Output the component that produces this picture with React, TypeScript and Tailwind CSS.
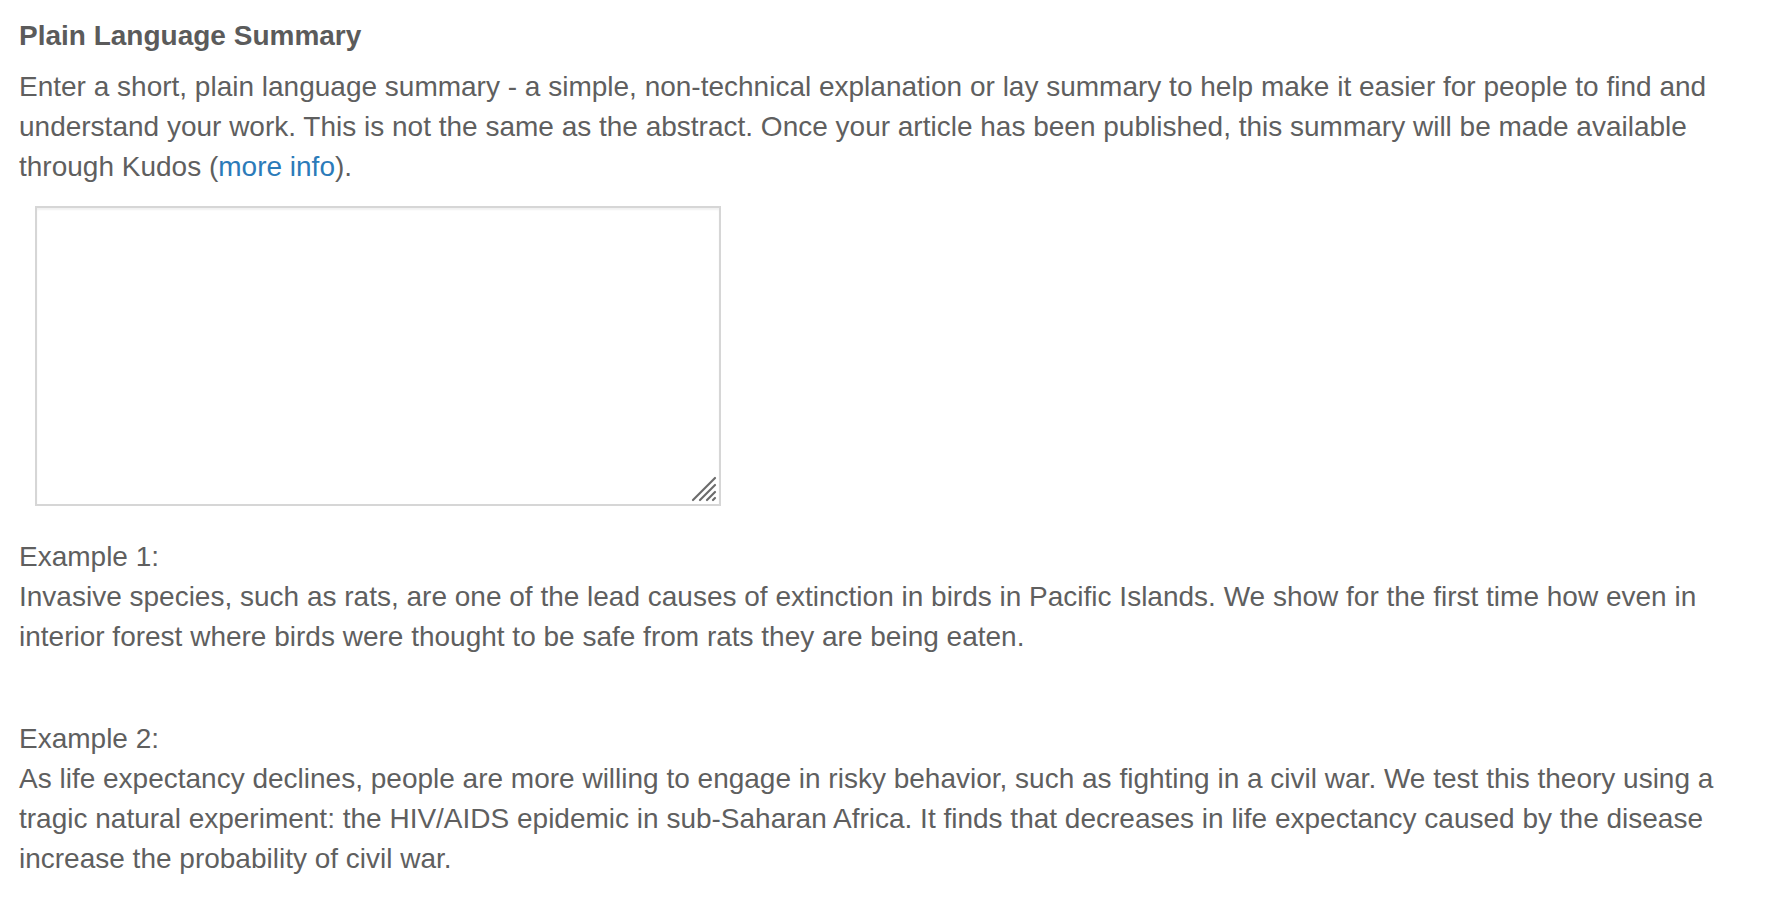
import React from "react";

const ResizeGrip: React.FC = () => (
  <svg
    className="pointer-events-none absolute bottom-[4px] right-[4px]"
    width="26"
    height="26"
    viewBox="0 0 26 26"
    fill="none"
    stroke="#6b6b6b"
    strokeWidth="2.2"
    strokeLinecap="round"
  >
    <line x1="2" y1="24" x2="24" y2="2" />
    <line x1="9" y1="24" x2="24" y2="9" />
    <line x1="16" y1="24" x2="24" y2="16" />
    <line x1="22" y1="24" x2="24" y2="22" />
  </svg>
);

const App: React.FC = () => {
  return (
    <div className="min-h-screen bg-white pl-[19px] pr-[26px] pt-[16px] font-['Liberation_Sans',Arial,sans-serif] text-[28px] leading-[40px] text-[#5f5f5f]">
      <h3 className="font-bold text-[#5b5b5b]">Plain Language Summary</h3>
      <p className="mt-[11px]">
        Enter a short, plain language summary - a simple, non-technical
        explanation or lay summary to help make it easier for people to find
        and understand your work. This is not the same as the abstract. Once
        your article has been published, this summary will be made available
        through Kudos (<a href="#" className="text-[#2b7bb9]">more info</a>).
      </p>

      <div className="relative ml-[16px] mt-[19px] h-[300px] w-[686px]">
        <textarea className="block h-full w-full resize-none border-2 border-[#d6d6d6] bg-white shadow-[inset_0_2px_2px_rgba(0,0,0,0.06)] outline-none" />
        <ResizeGrip />
      </div>

      <div className="mt-[31px]">
        <p>Example 1:</p>
        <p>
          Invasive species, such as rats, are one of the lead causes of
          extinction in birds in Pacific Islands. We show for the first time
          how even in interior forest where birds were thought to be safe from
          rats they are being eaten.
        </p>
      </div>

      <div className="mt-[62px]">
        <p>Example 2:</p>
        <p>
          As life expectancy declines, people are more willing to engage in
          risky behavior, such as fighting in a civil war. We test this theory
          using a tragic natural experiment: the HIV/AIDS epidemic in
          sub-Saharan Africa. It finds that decreases in life expectancy caused
          by the disease increase the probability of civil war.
        </p>
      </div>
    </div>
  );
};

export default App;
